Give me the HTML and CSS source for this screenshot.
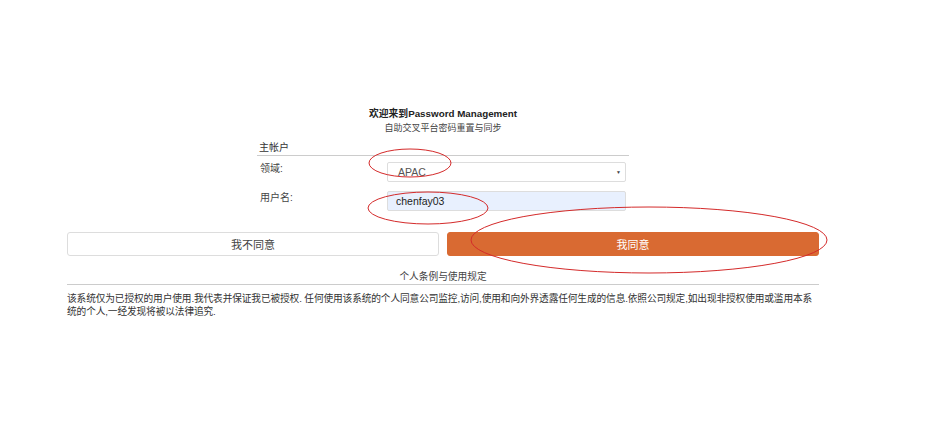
FILE: index.html
```html
<!DOCTYPE html>
<html lang="zh">
<head>
<meta charset="utf-8">
<link rel="stylesheet" href="styles.css">
</head>
<body>
<div class="page">
  <div class="head">
    <div class="title">欢迎来到Password Management</div>
    <div class="subtitle">自助交叉平台密码重置与同步</div>
  </div>
  <div class="form">
    <div class="section">主帐户</div>
    <div class="row">
      <div class="label">领域:</div>
      <div class="select"><span>APAC</span><span class="caret">▼</span></div>
    </div>
    <div class="row">
      <div class="label">用户名:</div>
      <div class="input">chenfay03</div>
    </div>
  </div>
  <div class="buttons">
    <div class="btn btn-default">我不同意</div>
    <div class="btn btn-primary">我同意</div>
  </div>
  <div class="terms-title">个人条例与使用规定</div>
  <div class="terms">该系统仅为已授权的用户使用.我代表并保证我已被授权. 任何使用该系统的个人同意公司监控,访问,使用和向外界透露任何生成的信息.依照公司规定,如出现非授权使用或滥用本系统的个人,一经发现将被以法律追究.</div>
</div>
<svg class="marks" width="941" height="439" viewBox="0 0 941 439">
  <ellipse cx="410" cy="163" rx="41" ry="14" />
  <ellipse cx="428" cy="208" rx="60" ry="16" />
  <ellipse cx="649" cy="240" rx="178" ry="33" />
</svg>
</body>
</html>
```
FILE: styles.css
```css
html, body {
  margin: 0;
  padding: 0;
  background: #fff;
}
body {
  font-family: "Liberation Sans", "Noto Sans CJK SC", sans-serif;
  font-size: 10px;
  color: #333;
  width: 941px;
  height: 439px;
  position: relative;
  overflow: hidden;
}
.page {
  width: 752px;
  margin-left: 67px;
  padding-top: 107px;
}
.head {
  text-align: center;
  line-height: 14px;
}
.title {
  font-weight: bold;
  font-size: 9.8px;
  color: #222;
}
.subtitle {
  color: #444;
  font-size: 9px;
}
.form {
  width: 369px;
  margin: 4px auto 0;
  padding-left: 3px;
}
.section {
  padding-left: 2px;
  border-bottom: 1px solid #ccc;
  margin-left: -3px;
  height: 16px;
  line-height: 18px;
}
.row {
  display: flex;
  margin-top: 6px;
}
.row + .row {
  margin-top: 9px;
}
.label {
  width: 127px;
  line-height: 14px;
  color: #444;
}
.select, .input {
  width: 239px;
  height: 20px;
  box-sizing: border-box;
  border: 1px solid #ddd;
  border-radius: 2px;
  display: flex;
  align-items: center;
  font-size: 10.5px;
}
.select {
  justify-content: space-between;
  padding: 0 4px 0 10px;
  color: #555;
}
.caret {
  font-size: 5px;
  color: #444;
}
.input {
  background: #e8f0fe;
  padding-left: 8px;
  color: #222;
}
.buttons {
  display: flex;
  gap: 8px;
  margin-top: 21px;
}
.btn {
  flex: 1;
  height: 24px;
  box-sizing: border-box;
  border-radius: 3px;
  display: flex;
  align-items: center;
  justify-content: center;
  font-size: 11px;
}
.btn-default {
  border: 1px solid #ddd;
  color: #444;
  background: #fff;
}
.btn-primary {
  background: #d96a32;
  border: 1px solid #d96a32;
  color: #fff;
}
.terms-title {
  text-align: center;
  margin-top: 14px;
  line-height: 14px;
  border-bottom: 1px solid #ccc;
  color: #444;
  font-size: 9.7px;
}
.terms {
  margin-top: 7px;
  line-height: 13px;
  color: #333;
  font-size: 9.7px;
  letter-spacing: -0.12px;
}
.marks {
  position: absolute;
  left: 0;
  top: 0;
  pointer-events: none;
}
.marks ellipse {
  fill: none;
  stroke: #d42a2a;
  stroke-width: 1;
}
```
